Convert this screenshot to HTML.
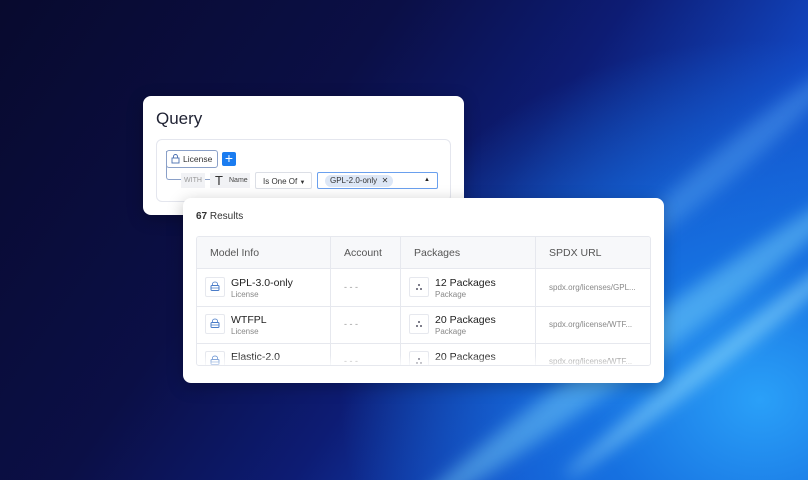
<!DOCTYPE html>
<html style="width:808px;height:480px;overflow:hidden"><head><style>
*{box-sizing:border-box;margin:0;padding:0}
body{width:808px;height:480px;overflow:hidden;font-family:"Liberation Sans",sans-serif;position:relative;
background:
radial-gradient(ellipse 420px 360px at 760px 400px, #2aa0f8 0%, #1670e0 40%, rgba(16,70,200,0) 100%),
linear-gradient(125deg,#080a2e 0%,#0b0f46 35%,#0d1c74 55%,#1248c4 75%,#1a70e4 100%);}
.streak{position:absolute;transform-origin:left top;border-radius:50%;filter:blur(8px)}
.card{position:absolute;background:#fff;border-radius:8px;box-shadow:0 4px 16px rgba(0,0,0,.25)}
.t{position:absolute;white-space:nowrap}
.ic{position:absolute;width:20px;height:20px;border:1px solid #e6e8ee;border-radius:2px}
</style></head><body>
<div style="position:absolute;left:0;top:0;width:808px;height:480px;overflow:hidden;clip-path:inset(0)">
<div class="streak" style="left:400px;top:500px;width:560px;height:36px;background:rgba(140,230,255,.4);transform:rotate(-36deg)"></div>
<div class="streak" style="left:560px;top:470px;width:400px;height:18px;background:rgba(170,240,255,.5);transform:rotate(-38deg)"></div>
<div class="streak" style="left:600px;top:250px;width:300px;height:30px;background:rgba(120,200,255,.3);transform:rotate(-40deg)"></div>
</div>

<div class="card" style="left:143px;top:96px;width:321px;height:119px">
 <div class="t" style="left:13px;top:13px;font-size:17px;color:#1f2233">Query</div>
 <div style="position:absolute;left:13px;top:43px;width:295px;height:63px;border:1px solid #e4e6ee;border-radius:6px"></div>
 <div style="position:absolute;left:23px;top:55px;width:52px;height:29px;border-left:1px solid #8aa0c8;border-bottom:1px solid #8aa0c8;border-radius:0 0 0 3px"></div>
 <div style="position:absolute;left:23px;top:54px;width:52px;height:18px;border:1px solid #8aa0c8;border-radius:3px;background:#fff;font-size:8.5px;color:#333;padding:3px 0 0 16px">License
  <svg style="position:absolute;left:4px;top:3px" width="9" height="10" viewBox="0 0 9 10"><rect x="1" y="4" width="7" height="5" fill="none" stroke="#4a6fb0" stroke-width=".9"/><path d="M2.5 4V2.5a2 2 0 0 1 4 0V4" fill="none" stroke="#4a6fb0" stroke-width=".9"/></svg></div>
 <div style="position:absolute;left:79px;top:56px;width:14px;height:14px;background:#1a7cf0;border-radius:2px;color:#fff;font-size:14px;line-height:13px;text-align:center">+</div>
 <div class="t" style="left:38px;top:77px;width:24px;height:15px;background:#f1f2f5;font-size:7px;color:#999;padding-top:4px;text-align:center">WITH</div>
 <div class="t" style="left:67px;top:77px;width:40px;height:15px;background:#f1f2f5;font-size:7px;color:#444;padding:4px 0 0 19px"><span style="position:absolute;left:5px;top:0;font-size:13px;color:#333">T</span>Name</div>
 <div class="t" style="left:112px;top:76px;width:57px;height:17px;border:1px solid #dcdfe6;border-radius:2px;font-size:8px;color:#333;padding:4px 0 0 7px">Is One Of <span style="font-size:6px">▼</span></div>
 <div class="t" style="left:174px;top:76px;width:121px;height:17px;border:1px solid #6aa0ee;border-radius:2px">
  <div class="t" style="left:7px;top:2px;height:12px;background:#dde7f6;border-radius:6px;font-size:8px;color:#333;padding:1px 5px">GPL-2.0-only &nbsp;✕</div>
  <div class="t" style="right:7px;top:4px;font-size:6px;color:#222">▲</div>
 </div>
</div>

<div class="card" style="left:183px;top:198px;width:481px;height:185px">
 <div class="t" style="left:13px;top:13px;font-size:10px;color:#333"><b>67</b> Results</div>
 <div style="position:absolute;left:13px;top:38px;width:455px;height:130px;border:1px solid #e6e8ee;border-radius:3px;overflow:hidden;font-size:10.5px;color:#222">
  <div style="position:absolute;left:0;top:0;width:455px;height:32px;background:#f7f8fa;border-bottom:1px solid #e6e8ee"></div>
  <div style="position:absolute;left:0;top:69px;width:455px;border-top:1px solid #e6e8ee"></div>
  <div style="position:absolute;left:0;top:106px;width:455px;border-top:1px solid #e6e8ee"></div>
  <div style="position:absolute;left:133px;top:0;height:130px;border-left:1px solid #e6e8ee"></div>
  <div style="position:absolute;left:203px;top:0;height:130px;border-left:1px solid #e6e8ee"></div>
  <div style="position:absolute;left:338px;top:0;height:130px;border-left:1px solid #e6e8ee"></div>
  <div class="t" style="left:13px;top:10px;color:#555">Model Info</div>
  <div class="t" style="left:147px;top:10px;color:#555">Account</div>
  <div class="t" style="left:217px;top:10px;color:#555">Packages</div>
  <div class="t" style="left:352px;top:10px;color:#555">SPDX URL</div>

  <div class="ic" style="left:8px;top:40px"><svg width="18" height="18" viewBox="0 0 18 18"><rect x="5" y="7.5" width="8" height="5" rx="1" fill="none" stroke="#4a7cc8"/><path d="M6.5 7.5V6a2.5 2 0 0 1 5 0v1.5M5 10h8" fill="none" stroke="#4a7cc8" stroke-width=".8"/></svg></div>
  <div class="t" style="left:34px;top:40px">GPL-3.0-only</div><div class="t" style="left:34px;top:53px;font-size:8px;color:#888">License</div>
  <div class="t" style="left:147px;top:45px;color:#999;font-size:9px">- - -</div>
  <div class="ic" style="left:212px;top:40px"><svg width="18" height="18" viewBox="0 0 18 18"><circle cx="9" cy="7" r="1" fill="#556"/><circle cx="7" cy="11" r="1" fill="#556"/><circle cx="11" cy="11" r="1" fill="#556"/></svg></div>
  <div class="t" style="left:238px;top:40px">12 Packages</div><div class="t" style="left:238px;top:53px;font-size:8px;color:#888">Package</div>
  <div class="t" style="left:352px;top:46px;font-size:8px;color:#888">spdx.org/licenses/GPL...</div>

  <div class="ic" style="left:8px;top:77px"><svg width="18" height="18" viewBox="0 0 18 18"><rect x="5" y="7.5" width="8" height="5" rx="1" fill="none" stroke="#4a7cc8"/><path d="M6.5 7.5V6a2.5 2 0 0 1 5 0v1.5M5 10h8" fill="none" stroke="#4a7cc8" stroke-width=".8"/></svg></div>
  <div class="t" style="left:34px;top:77px">WTFPL</div><div class="t" style="left:34px;top:90px;font-size:8px;color:#888">License</div>
  <div class="t" style="left:147px;top:82px;color:#999;font-size:9px">- - -</div>
  <div class="ic" style="left:212px;top:77px"><svg width="18" height="18" viewBox="0 0 18 18"><circle cx="9" cy="7" r="1" fill="#556"/><circle cx="7" cy="11" r="1" fill="#556"/><circle cx="11" cy="11" r="1" fill="#556"/></svg></div>
  <div class="t" style="left:238px;top:77px">20 Packages</div><div class="t" style="left:238px;top:90px;font-size:8px;color:#888">Package</div>
  <div class="t" style="left:352px;top:83px;font-size:8px;color:#888">spdx.org/license/WTF...</div>

  <div class="ic" style="left:8px;top:114px"><svg width="18" height="18" viewBox="0 0 18 18"><rect x="5" y="7.5" width="8" height="5" rx="1" fill="none" stroke="#4a7cc8"/><path d="M6.5 7.5V6a2.5 2 0 0 1 5 0v1.5M5 10h8" fill="none" stroke="#4a7cc8" stroke-width=".8"/></svg></div>
  <div class="t" style="left:34px;top:114px">Elastic-2.0</div>
  <div class="t" style="left:147px;top:119px;color:#999;font-size:9px">- - -</div>
  <div class="ic" style="left:212px;top:114px"><svg width="18" height="18" viewBox="0 0 18 18"><circle cx="9" cy="7" r="1" fill="#556"/><circle cx="7" cy="11" r="1" fill="#556"/><circle cx="11" cy="11" r="1" fill="#556"/></svg></div>
  <div class="t" style="left:238px;top:114px">20 Packages</div>
  <div class="t" style="left:352px;top:120px;font-size:8px;color:#888">spdx.org/license/WTF...</div>
  <div style="position:absolute;left:0;top:118px;width:455px;height:12px;background:linear-gradient(rgba(255,255,255,0),rgba(255,255,255,.85))"></div>
 </div>
</div>
</body></html>
